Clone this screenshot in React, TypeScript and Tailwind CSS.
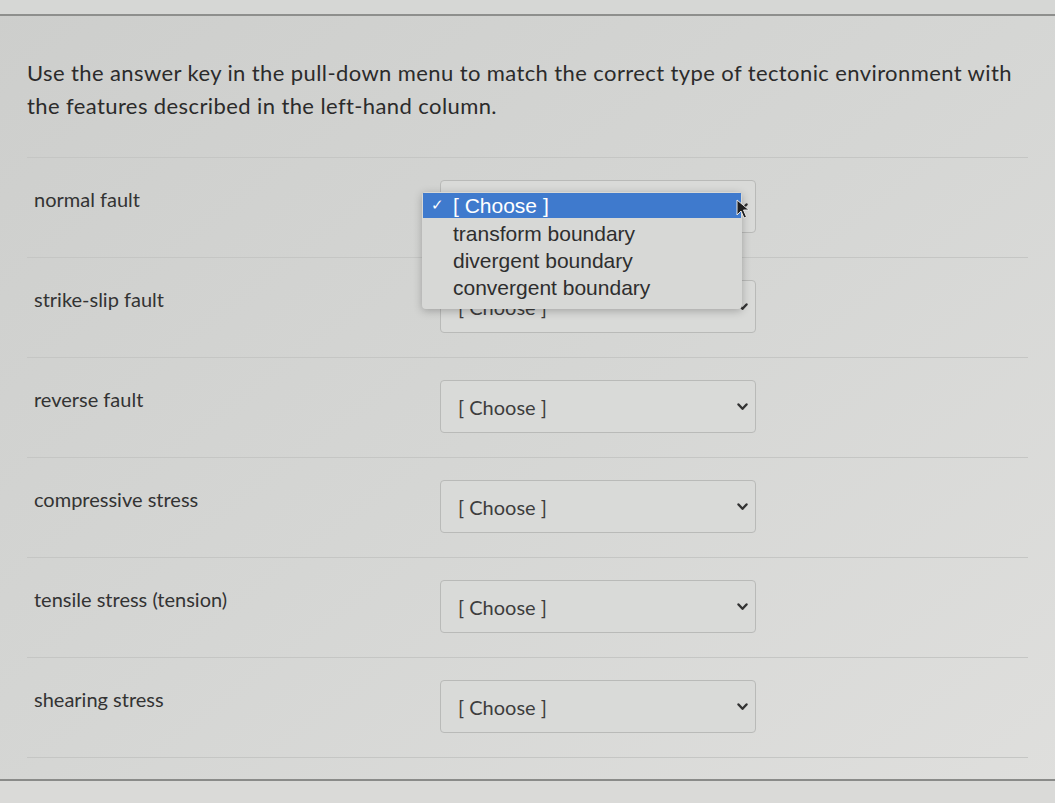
import React from "react";

const rows = [
  "normal fault",
  "strike-slip fault",
  "reverse fault",
  "compressive stress",
  "tensile stress (tension)",
  "shearing stress",
];

function Chevron() {
  return (
    <svg width="11" height="8" viewBox="0 0 11 8" className="shrink-0">
      <path d="M1.5 1.5 L5.5 5.8 L9.5 1.5" fill="none" stroke="#333" strokeWidth="2.4" strokeLinecap="round" strokeLinejoin="round" />
    </svg>
  );
}

function SelectBox({ dim }: { dim?: boolean }) {
  return (
    <div className="flex h-[53px] w-[316px] items-center justify-between rounded-[4px] border border-[#b9bab8] bg-[#d9dad8] pl-[17px] pr-[7px]">
      <span
        className={"text-[20px] text-[#3d3d3d] " + (dim ? "opacity-0" : "")}
        style={{ fontFamily: "Lato, 'Open Sans', sans-serif" }}
      >
        [ Choose ]
      </span>
      <Chevron />
    </div>
  );
}

export default function App() {
  return (
    <div
      className="relative h-[803px] w-[1055px] overflow-hidden bg-gradient-to-br from-[#cdcecc] via-[#d5d6d4] to-[#dfdfdd]"
      style={{ fontFamily: "Lato, 'Open Sans', sans-serif" }}
    >
      <div className="h-[14px] bg-[#d6d7d5]" />
      <div className="h-[2px] bg-[#8e8f8d]" />
      <div className="pl-[27px] pt-[40px]">
        <p className="w-[1000px] text-[22px] leading-[33px] tracking-[0.4px] text-[#2b2b2b]">
          Use the answer key in the pull-down menu to match the correct type of tectonic environment with
          the features described in the left-hand column.
        </p>
      </div>
      <div className="mx-[27px] mt-[35px] border-t border-[#c5c6c4]">
        {rows.map((r, i) => (
          <div key={r} className="flex h-[100px] items-start border-b border-[#c5c6c4]">
            <div className="w-[413px] pl-[7px] pt-[26px] text-[20px] text-[#333]">{r}</div>
            <div className="pt-[22px]">
              <SelectBox dim={i === 0} />
            </div>
          </div>
        ))}
      </div>
      <div className="absolute left-0 right-0 top-[779px] h-[2px] bg-[#8a8b89]" />
      <div className="absolute left-0 right-0 top-[781px] h-[22px] bg-[#dadad8]" />

      {/* Open dropdown menu */}
      <div
        className="absolute left-[422px] top-[192px] w-[320px] rounded-[4px] bg-[#d7d8d6] pb-[8px] shadow-[0_2px_8px_rgba(0,0,0,0.25)]"
        style={{ fontFamily: "'Liberation Sans', Arial, sans-serif" }}
      >
        <div className="mx-[1px] mt-[1px] flex h-[25px] items-center bg-[#3f7acd] text-[21px] text-white">
          <span className="w-[30px] pl-[8px] text-[15px]">✓</span>
          <span>[ Choose ]</span>
        </div>
        <div className="pt-[2px]">
          {["transform boundary", "divergent boundary", "convergent boundary"].map((o) => (
            <div key={o} className="flex h-[27px] items-center pl-[31px] text-[21px] text-[#2e2e2e]">
              {o}
            </div>
          ))}
        </div>
      </div>
      {/* cursor */}
      <svg className="absolute left-[736px] top-[199px]" width="14" height="20" viewBox="0 0 14 20">
        <path d="M1 1 L1 16 L5 12 L8 19 L10.5 18 L7.5 11 L13 11 Z" fill="#1e1e1e" stroke="#e8e8e8" strokeWidth="1" />
      </svg>
    </div>
  );
}
